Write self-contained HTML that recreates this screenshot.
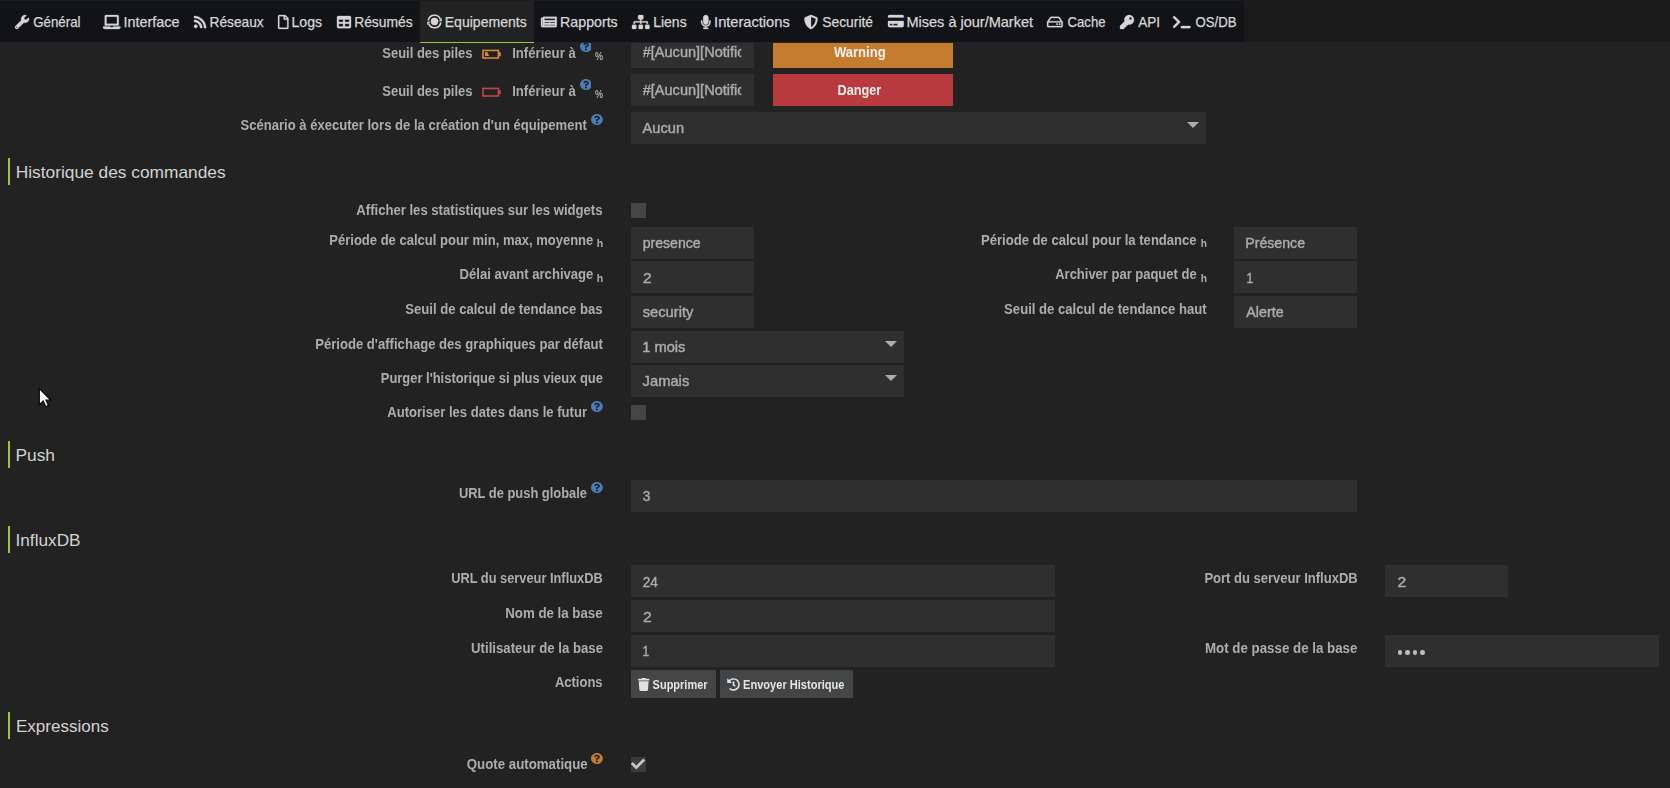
<!DOCTYPE html>
<html lang="fr"><head><meta charset="utf-8"><title>Jeedom - Configuration</title><style>
html,body{margin:0;padding:0}
body{width:1670px;height:788px;overflow:hidden;background:#222222;font-family:"Liberation Sans", sans-serif;position:relative}
#page,#page *{box-sizing:border-box}
.t{position:absolute;white-space:nowrap;transform-origin:0 0;margin:0;padding:0;border:0;text-decoration:none;display:block;font-weight:400}
sub.t{vertical-align:baseline}
#gl{position:absolute;left:0;top:0;width:1670px;height:788px;will-change:transform}
.nav{-webkit-text-stroke:0.25px currentColor}
.val{-webkit-text-stroke:0.4px currentColor}
.b,.ico{position:absolute;display:block}
.inp{background:#2f2f2f}
.cb{background:#444547}
.btn{background:#444547}
.bar{background:#94ca3c}
.arrow{position:absolute;right:7px;top:10px;width:0;height:0;border-left:6px solid transparent;border-right:6px solid transparent;border-top:6.4px solid #adadad}
.dot{position:absolute;width:4.4px;height:4.4px;border-radius:50%;background:#bcbcbc;top:15.2px}
#nav{position:absolute;left:0;top:0;width:1670px;height:43px;background:#222222;z-index:5}
#navr{position:absolute;left:0;top:0;width:1670px;height:42px;background:#1b1b1b}
#navin{position:absolute;left:0;top:1px;width:1244px;height:41px;background:#121316}
#navtop{position:absolute;left:0;top:0;width:1670px;height:1px;background:#1b1b1b}
#act{position:absolute;left:420px;top:1px;width:114px;height:42px;background:#222222;border-bottom:1px solid #94ca3c}
</style></head>
<body><div id="page">
<div class="b inp" style="left:631px;top:36px;width:123px;height:32px;"></div>
<div class="b inp" style="left:631px;top:74px;width:123px;height:32px;"></div>
<div class="b inp sel" style="left:631px;top:112px;width:575px;height:32px;"><i class="arrow"></i></div>
<div class="b btn" style="left:773px;top:36px;width:180px;height:32px;background:#c47d2f"></div>
<div class="b btn" style="left:773px;top:74px;width:180px;height:32px;background:#b93a3e"></div>
<div class="b inp" style="left:631px;top:227px;width:123px;height:32px;"></div>
<div class="b inp" style="left:1234px;top:227px;width:123px;height:32px;"></div>
<div class="b inp" style="left:631px;top:261px;width:123px;height:32px;"></div>
<div class="b inp" style="left:1234px;top:261px;width:123px;height:32px;"></div>
<div class="b inp" style="left:631px;top:296px;width:123px;height:32px;"></div>
<div class="b inp" style="left:1234px;top:296px;width:123px;height:32px;"></div>
<div class="b inp sel" style="left:631px;top:331px;width:273px;height:32px;"><i class="arrow"></i></div>
<div class="b inp sel" style="left:631px;top:365px;width:273px;height:32px;"><i class="arrow"></i></div>
<div class="b inp" style="left:631px;top:480px;width:726px;height:32px;"></div>
<div class="b inp" style="left:631px;top:565px;width:424px;height:32px;"></div>
<div class="b inp" style="left:631px;top:600px;width:424px;height:32px;"></div>
<div class="b inp" style="left:631px;top:635px;width:424px;height:32px;"></div>
<div class="b inp" style="left:1385px;top:565px;width:123px;height:32px;"></div>
<div class="b inp" style="left:1385px;top:635px;width:274px;height:32px;"><i class="dot" style="left:12.85px"></i><i class="dot" style="left:20.35px"></i><i class="dot" style="left:27.90px"></i><i class="dot" style="left:35.45px"></i></div>
<div class="b btn" style="left:631px;top:670px;width:85px;height:28px;"></div>
<div class="b btn" style="left:720px;top:670px;width:133px;height:28px;"></div>
<div class="b cb" style="left:631px;top:203px;width:15px;height:15px;"></div>
<div class="b cb" style="left:631px;top:405px;width:15px;height:15px;"></div>
<div class="b cb" style="left:631px;top:757px;width:15px;height:15px;background:#3b3b3b"></div>
<div class="b bar" style="left:8px;top:158px;width:2px;height:27px;"></div>
<div class="b bar" style="left:8px;top:441px;width:2px;height:27px;"></div>
<div class="b bar" style="left:8px;top:526px;width:2px;height:27px;"></div>
<div class="b bar" style="left:8px;top:712px;width:2px;height:27px;"></div>
<svg class="ico" style="left:638.40px;top:678.00px;overflow:visible" width="11.375" height="13" viewBox="0 0 448 512"><path fill="#e0e0e0" d="M432 32H312l-9.4-18.7A24 24 0 0 0 281.1 0H166.8a23.72 23.72 0 0 0-21.4 13.3L136 32H16A16 16 0 0 0 0 48v32a16 16 0 0 0 16 16h416a16 16 0 0 0 16-16V48a16 16 0 0 0-16-16zM53.2 467a48 48 0 0 0 47.9 45h245.800a48 48 0 0 0 47.9-45L416 128H32z"/></svg>
<svg class="ico" style="left:726.85px;top:678.00px;overflow:visible" width="13.000" height="13" viewBox="0 0 512 512"><path fill="#e0e0e0" d="M504 255.531c.253 136.64-111.18 248.372-247.82 248.468-59.015.042-113.223-20.53-155.822-54.911-11.077-8.94-11.905-25.541-1.839-35.607l11.267-11.267c8.609-8.609 22.353-9.551 31.891-1.984C173.062 425.135 212.781 440 256 440c101.705 0 184-82.311 184-184 0-101.705-82.311-184-184-184-48.814 0-93.149 18.969-126.068 49.932l50.754 50.754c10.08 10.08 2.941 27.314-11.313 27.314H24c-8.837 0-16-7.163-16-16V38.627c0-14.254 17.234-21.393 27.314-11.314l49.372 49.372C129.209 34.136 189.552 8 256 8c136.81 0 247.747 110.78 248 247.531zm-180.912 78.784l9.823-12.63c8.138-10.463 6.253-25.542-4.21-33.679L288 256.349V152c0-13.255-10.745-24-24-24h-16c-13.255 0-24 10.745-24 24v135.651l65.409 50.874c10.463 8.137 25.541 6.253 33.679-4.21z"/></svg>
<svg class="ico" style="left:630.60px;top:757.00px;overflow:visible" width="14.000" height="14" viewBox="0 0 512 512"><path fill="#c4c4c4" d="M173.898 439.404l-166.4-166.4c-9.997-9.997-9.997-26.206 0-36.204l36.203-36.204c9.997-9.998 26.207-9.998 36.204 0L192 312.69 432.095 72.596c9.997-9.997 26.207-9.997 36.204 0l36.203 36.204c9.997 9.997 9.997 26.206 0 36.204l-294.4 294.401c-9.998 9.997-26.207 9.997-36.204-.001z"/></svg>
<svg class="ico" style="left:579.55px;top:40.95px" width="11.9" height="11.1" viewBox="8 8 496 496" preserveAspectRatio="none"><path fill="#4a7eb7" d="M504 256c0 136.997-111.043 248-248 248S8 392.997 8 256C8 119.083 119.043 8 256 8s248 111.083 248 248zM262.655 90c-54.497 0-89.255 22.957-116.549 63.758-3.536 5.286-2.353 12.415 2.715 16.258l34.699 26.31c5.205 3.947 12.621 3.008 16.665-2.122 17.864-22.658 30.113-35.797 57.303-35.797 20.429 0 45.698 13.148 45.698 32.958 0 14.976-12.363 22.667-32.534 33.976C247.128 238.528 216 254.941 216 296v4c0 6.627 5.373 12 12 12h56c6.627 0 12-5.373 12-12v-1.333c0-28.462 83.186-29.647 83.186-106.667 0-58.002-60.165-102-116.531-102zM256 338c-25.365 0-46 20.635-46 46 0 25.364 20.635 46 46 46s46-20.636 46-46c0-25.365-20.635-46-46-46z"/></svg>
<svg class="ico" style="left:579.55px;top:78.95px" width="11.9" height="11.1" viewBox="8 8 496 496" preserveAspectRatio="none"><path fill="#4a7eb7" d="M504 256c0 136.997-111.043 248-248 248S8 392.997 8 256C8 119.083 119.043 8 256 8s248 111.083 248 248zM262.655 90c-54.497 0-89.255 22.957-116.549 63.758-3.536 5.286-2.353 12.415 2.715 16.258l34.699 26.31c5.205 3.947 12.621 3.008 16.665-2.122 17.864-22.658 30.113-35.797 57.303-35.797 20.429 0 45.698 13.148 45.698 32.958 0 14.976-12.363 22.667-32.534 33.976C247.128 238.528 216 254.941 216 296v4c0 6.627 5.373 12 12 12h56c6.627 0 12-5.373 12-12v-1.333c0-28.462 83.186-29.647 83.186-106.667 0-58.002-60.165-102-116.531-102zM256 338c-25.365 0-46 20.635-46 46 0 25.364 20.635 46 46 46s46-20.636 46-46c0-25.365-20.635-46-46-46z"/></svg>
<svg class="ico" style="left:591.05px;top:113.85px" width="11.9" height="11.1" viewBox="8 8 496 496" preserveAspectRatio="none"><path fill="#4a7eb7" d="M504 256c0 136.997-111.043 248-248 248S8 392.997 8 256C8 119.083 119.043 8 256 8s248 111.083 248 248zM262.655 90c-54.497 0-89.255 22.957-116.549 63.758-3.536 5.286-2.353 12.415 2.715 16.258l34.699 26.31c5.205 3.947 12.621 3.008 16.665-2.122 17.864-22.658 30.113-35.797 57.303-35.797 20.429 0 45.698 13.148 45.698 32.958 0 14.976-12.363 22.667-32.534 33.976C247.128 238.528 216 254.941 216 296v4c0 6.627 5.373 12 12 12h56c6.627 0 12-5.373 12-12v-1.333c0-28.462 83.186-29.647 83.186-106.667 0-58.002-60.165-102-116.531-102zM256 338c-25.365 0-46 20.635-46 46 0 25.364 20.635 46 46 46s46-20.636 46-46c0-25.365-20.635-46-46-46z"/></svg>
<svg class="ico" style="left:590.90px;top:400.90px" width="11.9" height="11.1" viewBox="8 8 496 496" preserveAspectRatio="none"><path fill="#4a7eb7" d="M504 256c0 136.997-111.043 248-248 248S8 392.997 8 256C8 119.083 119.043 8 256 8s248 111.083 248 248zM262.655 90c-54.497 0-89.255 22.957-116.549 63.758-3.536 5.286-2.353 12.415 2.715 16.258l34.699 26.31c5.205 3.947 12.621 3.008 16.665-2.122 17.864-22.658 30.113-35.797 57.303-35.797 20.429 0 45.698 13.148 45.698 32.958 0 14.976-12.363 22.667-32.534 33.976C247.128 238.528 216 254.941 216 296v4c0 6.627 5.373 12 12 12h56c6.627 0 12-5.373 12-12v-1.333c0-28.462 83.186-29.647 83.186-106.667 0-58.002-60.165-102-116.531-102zM256 338c-25.365 0-46 20.635-46 46 0 25.364 20.635 46 46 46s46-20.636 46-46c0-25.365-20.635-46-46-46z"/></svg>
<svg class="ico" style="left:591.05px;top:482.15px" width="11.9" height="11.1" viewBox="8 8 496 496" preserveAspectRatio="none"><path fill="#4a7eb7" d="M504 256c0 136.997-111.043 248-248 248S8 392.997 8 256C8 119.083 119.043 8 256 8s248 111.083 248 248zM262.655 90c-54.497 0-89.255 22.957-116.549 63.758-3.536 5.286-2.353 12.415 2.715 16.258l34.699 26.31c5.205 3.947 12.621 3.008 16.665-2.122 17.864-22.658 30.113-35.797 57.303-35.797 20.429 0 45.698 13.148 45.698 32.958 0 14.976-12.363 22.667-32.534 33.976C247.128 238.528 216 254.941 216 296v4c0 6.627 5.373 12 12 12h56c6.627 0 12-5.373 12-12v-1.333c0-28.462 83.186-29.647 83.186-106.667 0-58.002-60.165-102-116.531-102zM256 338c-25.365 0-46 20.635-46 46 0 25.364 20.635 46 46 46s46-20.636 46-46c0-25.365-20.635-46-46-46z"/></svg>
<svg class="ico" style="left:591.05px;top:752.85px" width="11.9" height="11.1" viewBox="8 8 496 496" preserveAspectRatio="none"><path fill="#c47d2f" d="M504 256c0 136.997-111.043 248-248 248S8 392.997 8 256C8 119.083 119.043 8 256 8s248 111.083 248 248zM262.655 90c-54.497 0-89.255 22.957-116.549 63.758-3.536 5.286-2.353 12.415 2.715 16.258l34.699 26.31c5.205 3.947 12.621 3.008 16.665-2.122 17.864-22.658 30.113-35.797 57.303-35.797 20.429 0 45.698 13.148 45.698 32.958 0 14.976-12.363 22.667-32.534 33.976C247.128 238.528 216 254.941 216 296v4c0 6.627 5.373 12 12 12h56c6.627 0 12-5.373 12-12v-1.333c0-28.462 83.186-29.647 83.186-106.667 0-58.002-60.165-102-116.531-102zM256 338c-25.365 0-46 20.635-46 46 0 25.364 20.635 46 46 46s46-20.636 46-46c0-25.365-20.635-46-46-46z"/></svg>
<svg class="ico" style="left:481.8px;top:49.4px" width="20" height="10" viewBox="0 0 20 10"><rect x="1" y="1.45" width="15.4" height="7.55" fill="none" stroke="#d68b34" stroke-width="1.6"/><rect x="17" y="3.2" width="1.8" height="4" fill="#d68b34"/><path d="M3.05 2.9h2.25l1.9 4h-4.15z" fill="#d68b34"/></svg>
<svg class="ico" style="left:481.8px;top:87.4px" width="20" height="10" viewBox="0 0 20 10"><rect x="1" y="1.45" width="15.4" height="7.55" fill="none" stroke="#c9414a" stroke-width="1.6"/><rect x="17" y="3.2" width="1.8" height="4" fill="#c9414a"/></svg>
<svg class="ico" style="left:38px;top:387px;z-index:9" width="14" height="21" viewBox="0 0 14 21"><path d="M1.3 1.6V17.6L5.2 14L7.7 19.6L10.4 18.5L8 13.2H13Z" fill="#fff" stroke="#05050c" stroke-width="1.2" stroke-linejoin="miter"/></svg>
<legend class="t leg" style="left:15px;top:160.50px;font-size:17px;line-height:24px;transform:translateX(0.68px) scaleX(1.0192);color:#d2d2d2;">Historique des commandes</legend>
<legend class="t leg" style="left:15px;top:443.50px;font-size:17px;line-height:24px;transform:translateX(0.48px) scaleX(1.0189);color:#d2d2d2;">Push</legend>
<legend class="t leg" style="left:15px;top:528.50px;font-size:17px;line-height:24px;transform:translateX(0.49px) scaleX(1.0126);color:#d2d2d2;">InfluxDB</legend>
<legend class="t leg" style="left:15px;top:714.50px;font-size:17px;line-height:24px;transform:translateX(0.90px) scaleX(1.0033);color:#d2d2d2;">Expressions</legend>
<div id="gl"><label class="t lbl" style="left:382px;top:43.00px;font-size:14px;line-height:20px;transform:translateX(0.30px) scaleX(0.9274);color:#adadad;font-weight:700;">Seuil des piles</label>
<label class="t lbl" style="left:512px;top:43.00px;font-size:14px;line-height:20px;transform:translateX(0.20px) scaleX(0.9381);color:#adadad;font-weight:700;">Inférieur à</label>
<label class="t lbl" style="left:382px;top:81.00px;font-size:14px;line-height:20px;transform:translateX(0.30px) scaleX(0.9274);color:#adadad;font-weight:700;">Seuil des piles</label>
<label class="t lbl" style="left:512px;top:81.00px;font-size:14px;line-height:20px;transform:translateX(0.20px) scaleX(0.9381);color:#adadad;font-weight:700;">Inférieur à</label>
<label class="t lbl" style="left:240px;top:115.00px;font-size:14px;line-height:20px;transform:translateX(0.50px) scaleX(0.9325);color:#adadad;font-weight:700;">Scénario à éxecuter lors de la création d'un équipement</label>
<label class="t lbl" style="left:356px;top:200.00px;font-size:14px;line-height:20px;transform:translateX(0.30px) scaleX(0.9362);color:#adadad;font-weight:700;">Afficher les statistiques sur les widgets</label>
<label class="t lbl" style="left:329px;top:230.00px;font-size:14px;line-height:20px;transform:translateX(0.30px) scaleX(0.9297);color:#adadad;font-weight:700;">Période de calcul pour min, max, moyenne</label>
<label class="t lbl" style="left:459px;top:264.00px;font-size:14px;line-height:20px;transform:translateX(0.60px) scaleX(0.9338);color:#adadad;font-weight:700;">Délai avant archivage</label>
<label class="t lbl" style="left:405px;top:299.00px;font-size:14px;line-height:20px;transform:translateX(0.30px) scaleX(0.9352);color:#adadad;font-weight:700;">Seuil de calcul de tendance bas</label>
<label class="t lbl" style="left:315px;top:334.00px;font-size:14px;line-height:20px;transform:translateX(0.20px) scaleX(0.9352);color:#adadad;font-weight:700;">Période d'affichage des graphiques par défaut</label>
<label class="t lbl" style="left:380px;top:368.00px;font-size:14px;line-height:20px;transform:translateX(0.80px) scaleX(0.9231);color:#adadad;font-weight:700;">Purger l'historique si plus vieux que</label>
<label class="t lbl" style="left:387px;top:402.00px;font-size:14px;line-height:20px;transform:translateX(0.20px) scaleX(0.9338);color:#adadad;font-weight:700;">Autoriser les dates dans le futur</label>
<label class="t lbl" style="left:981px;top:230.00px;font-size:14px;line-height:20px;transform:translateX(0.00px) scaleX(0.9331);color:#adadad;font-weight:700;">Période de calcul pour la tendance</label>
<label class="t lbl" style="left:1055px;top:264.00px;font-size:14px;line-height:20px;transform:translateX(0.20px) scaleX(0.9273);color:#adadad;font-weight:700;">Archiver par paquet de</label>
<label class="t lbl" style="left:1004px;top:299.00px;font-size:14px;line-height:20px;transform:translateX(0.10px) scaleX(0.9362);color:#adadad;font-weight:700;">Seuil de calcul de tendance haut</label>
<label class="t lbl" style="left:459px;top:483.00px;font-size:14px;line-height:20px;transform:translateX(0.00px) scaleX(0.9208);color:#adadad;font-weight:700;">URL de push globale</label>
<label class="t lbl" style="left:451px;top:568.00px;font-size:14px;line-height:20px;transform:translateX(0.20px) scaleX(0.9156);color:#adadad;font-weight:700;">URL du serveur InfluxDB</label>
<label class="t lbl" style="left:505px;top:603.00px;font-size:14px;line-height:20px;transform:translateX(0.20px) scaleX(0.9483);color:#adadad;font-weight:700;">Nom de la base</label>
<label class="t lbl" style="left:471px;top:637.50px;font-size:14px;line-height:20px;transform:translateX(0.10px) scaleX(0.9418);color:#adadad;font-weight:700;">Utilisateur de la base</label>
<label class="t lbl" style="left:554px;top:672.00px;font-size:14px;line-height:20px;transform:translateX(0.90px) scaleX(0.9292);color:#adadad;font-weight:700;">Actions</label>
<label class="t lbl" style="left:1204px;top:568.00px;font-size:14px;line-height:20px;transform:translateX(0.40px) scaleX(0.9296);color:#adadad;font-weight:700;">Port du serveur InfluxDB</label>
<label class="t lbl" style="left:1205px;top:638.00px;font-size:14px;line-height:20px;transform:translateX(0.00px) scaleX(0.9508);color:#adadad;font-weight:700;">Mot de passe de la base</label>
<label class="t lbl" style="left:466px;top:754.00px;font-size:14px;line-height:20px;transform:translateX(0.70px) scaleX(0.9486);color:#adadad;font-weight:700;">Quote automatique</label>
<sub class="t sub" style="left:595px;top:49.50px;font-size:10px;line-height:14px;transform:translateX(0.00px) scaleX(0.9111);color:#adadad;font-weight:700;">%</sub>
<sub class="t sub" style="left:595px;top:87.50px;font-size:10px;line-height:14px;transform:translateX(0.00px) scaleX(0.9111);color:#adadad;font-weight:700;">%</sub>
<sub class="t sub" style="left:596px;top:236.00px;font-size:10.5px;line-height:14px;transform:translateX(0.70px) scaleX(1.0000);color:#adadad;font-weight:700;">h</sub>
<sub class="t sub" style="left:596px;top:271.00px;font-size:10.5px;line-height:14px;transform:translateX(0.70px) scaleX(1.0000);color:#adadad;font-weight:700;">h</sub>
<sub class="t sub" style="left:1200px;top:236.00px;font-size:10.5px;line-height:14px;transform:translateX(0.70px) scaleX(0.9667);color:#adadad;font-weight:700;">h</sub>
<sub class="t sub" style="left:1200px;top:271.00px;font-size:10.5px;line-height:14px;transform:translateX(0.70px) scaleX(0.9667);color:#adadad;font-weight:700;">h</sub>
<span class="t val" style="left:642px;top:118.50px;font-size:13.72px;line-height:20px;transform:translateX(0.60px) scaleX(1.0661);color:#acacac;">Aucun</span>
<span class="t val" style="left:642px;top:233.50px;font-size:13.72px;line-height:20px;transform:translateX(0.70px) scaleX(1.0263);color:#acacac;">presence</span>
<span class="t val" style="left:643px;top:268.50px;font-size:13.72px;line-height:20px;transform:translateX(0.00px) scaleX(1.1286);color:#acacac;">2</span>
<span class="t val" style="left:642px;top:302.50px;font-size:13.72px;line-height:20px;transform:translateX(0.70px) scaleX(1.0737);color:#acacac;">security</span>
<span class="t val" style="left:642px;top:337.50px;font-size:13.72px;line-height:20px;transform:translateX(0.23px) scaleX(1.0696);color:#acacac;">1 mois</span>
<span class="t val" style="left:642px;top:371.50px;font-size:13.72px;line-height:20px;transform:translateX(0.60px) scaleX(1.0735);color:#acacac;">Jamais</span>
<span class="t val" style="left:1245px;top:233.50px;font-size:13.72px;line-height:20px;transform:translateX(0.27px) scaleX(1.0309);color:#acacac;">Présence</span>
<span class="t val" style="left:1246px;top:268.50px;font-size:13.72px;line-height:20px;transform:translateX(0.52px) scaleX(0.8833);color:#acacac;">1</span>
<span class="t val" style="left:1246px;top:302.50px;font-size:13.72px;line-height:20px;transform:translateX(0.30px) scaleX(1.0412);color:#acacac;">Alerte</span>
<span class="t val" style="left:642px;top:486.50px;font-size:13.72px;line-height:20px;transform:translateX(0.80px) scaleX(0.9875);color:#acacac;">3</span>
<span class="t val" style="left:642px;top:572.50px;font-size:13.72px;line-height:20px;transform:translateX(0.80px) scaleX(0.9917);color:#acacac;">24</span>
<span class="t val" style="left:642px;top:607.50px;font-size:13.72px;line-height:20px;transform:translateX(0.90px) scaleX(1.1429);color:#acacac;">2</span>
<span class="t val" style="left:642px;top:641.50px;font-size:13.72px;line-height:20px;transform:translateX(0.52px) scaleX(0.8833);color:#acacac;">1</span>
<span class="t val" style="left:1397px;top:572.50px;font-size:13.72px;line-height:20px;transform:translateX(0.40px) scaleX(1.1429);color:#acacac;">2</span>
<span class="t val" style="left:642px;top:42.50px;font-size:13.72px;line-height:20px;transform:translateX(0.70px) scaleX(1.0601);color:#acacac;width:93.20px;overflow:hidden;">#[Aucun][Notification]#</span>
<span class="t val" style="left:642px;top:80.50px;font-size:13.72px;line-height:20px;transform:translateX(0.70px) scaleX(1.0601);color:#acacac;width:93.20px;overflow:hidden;">#[Aucun][Notification]#</span>
<span class="t btxt" style="left:834px;top:42.00px;font-size:14px;line-height:20px;transform:translateX(0.00px) scaleX(0.9304);color:#f2f2f2;font-weight:700;">Warning</span>
<span class="t btxt" style="left:837px;top:80.00px;font-size:14px;line-height:20px;transform:translateX(0.60px) scaleX(0.9039);color:#f2f2f2;font-weight:700;">Danger</span>
<span class="t btxt" style="left:652px;top:676.70px;font-size:12px;line-height:17px;transform:translateX(0.60px) scaleX(0.9164);color:#e4e4e4;font-weight:700;">Supprimer</span>
<span class="t btxt" style="left:743px;top:676.70px;font-size:12px;line-height:17px;transform:translateX(0.10px) scaleX(0.9207);color:#e4e4e4;font-weight:700;">Envoyer Historique</span></div>
<div id="nav"><div id="navr"></div><div id="navin"></div><div id="navtop"></div><div id="act"></div>
<svg class="ico" style="left:15.20px;top:15.00px;overflow:visible" width="14.000" height="14" viewBox="0 0 512 512"><path fill="#d6d6d6" stroke="#d6d6d6" stroke-width="10" d="M507.73 109.1c-2.24-9.03-13.54-12.09-20.12-5.51l-74.36 74.36-67.88-11.31-11.31-67.88 74.36-74.36c6.62-6.62 3.43-17.9-5.66-20.16-47.38-11.74-99.55.91-136.58 37.93-39.64 39.64-50.55 97.1-34.05 147.2L18.74 402.76c-24.99 24.99-24.99 65.51 0 90.5 24.99 24.99 65.51 24.99 90.5 0l213.21-213.21c50.12 16.71 107.47 5.68 147.37-34.22 37.07-37.07 49.7-89.32 37.91-136.73zM64 472c-13.25 0-24-10.75-24-24 0-13.26 10.75-24 24-24s24 10.74 24 24c0 13.25-10.75 24-24 24z"/></svg>
<svg class="ico" style="left:102.85px;top:15.00px;overflow:visible" width="17.500" height="14" viewBox="0 0 640 512"><path fill="#d6d6d6" stroke="#d6d6d6" stroke-width="10" d="M624 416H381.54c-.74 19.81-14.71 32-32.74 32H288c-18.69 0-33.02-17.47-32.77-32H16c-8.8 0-16 7.2-16 16v16c0 35.2 28.8 64 64 64h512c35.2 0 64-28.8 64-64v-16c0-8.8-7.2-16-16-16zM576 48c0-26.4-21.6-48-48-48H112C85.6 0 64 21.6 64 48v336h512V48zm-64 272H128V64h384v256z"/></svg>
<svg class="ico" style="left:194.20px;top:15.00px;overflow:visible" width="12.250" height="14" viewBox="0 0 448 512"><path fill="#d6d6d6" stroke="#d6d6d6" stroke-width="10" d="M128.081 415.959c0 35.369-28.672 64.041-64.041 64.041S0 451.328 0 415.959s28.672-64.041 64.041-64.041 64.04 28.673 64.04 64.041zm175.66 47.25c-8.354-154.6-132.185-278.587-286.95-286.95C7.656 175.765 0 183.105 0 192.253v48.069c0 8.415 6.49 15.472 14.887 16.018 111.832 7.284 201.473 96.702 208.772 208.772.547 8.397 7.604 14.887 16.018 14.887h48.069c9.149.001 16.489-7.655 15.995-16.79zm144.249.288C439.596 229.677 251.465 40.445 16.503 32.01 7.473 31.686 0 38.981 0 48.016v48.068c0 8.625 6.835 15.645 15.453 15.999 191.179 7.839 344.627 161.316 352.465 352.465.353 8.618 7.373 15.453 15.999 15.453h48.068c9.034-.001 16.329-7.474 16.005-16.504z"/></svg>
<svg class="ico" style="left:277.85px;top:15.00px;overflow:visible" width="10.500" height="14" viewBox="0 0 384 512"><path fill="#d6d6d6" stroke="#d6d6d6" stroke-width="10" d="M369.9 97.9L286 14C277 5 264.8-.1 252.1-.1H48C21.5 0 0 21.5 0 48v416c0 26.5 21.5 48 48 48h288c26.5 0 48-21.5 48-48V131.9c0-12.7-5.1-25-14.1-34zM332.1 128H256V51.9l76.1 76.1zM48 464V48h160v104c0 13.3 10.7 24 24 24h104v288H48z"/></svg>
<svg class="ico" style="left:336.70px;top:15.00px;overflow:visible" width="14.000" height="14" viewBox="0 0 512 512"><path fill="#d6d6d6" stroke="#d6d6d6" stroke-width="10" d="M464 32H48C21.49 32 0 53.49 0 80v352c0 26.51 21.49 48 48 48h416c26.51 0 48-21.49 48-48V80c0-26.51-21.49-48-48-48zM224 416H64v-96h160v96zm0-160H64v-96h160v96zm224 160H288v-96h160v96zm0-160H288v-96h160v96z"/></svg>
<svg class="ico" style="left:541.30px;top:15.00px;overflow:visible" width="15.750" height="14" viewBox="0 0 576 512"><path fill="#d6d6d6" stroke="#d6d6d6" stroke-width="10" d="M552 64H88c-13.255 0-24 10.745-24 24v8H24c-13.255 0-24 10.745-24 24v272c0 30.928 25.072 56 56 56h472c26.51 0 48-21.49 48-48V88c0-13.255-10.745-24-24-24zM56 400a8 8 0 0 1-8-8V144h16v248a8 8 0 0 1-8 8zm236-16H140c-6.627 0-12-5.373-12-12v-8c0-6.627 5.373-12 12-12h152c6.627 0 12 5.373 12 12v8c0 6.627-5.373 12-12 12zm208 0H348c-6.627 0-12-5.373-12-12v-8c0-6.627 5.373-12 12-12h152c6.627 0 12 5.373 12 12v8c0 6.627-5.373 12-12 12zm-208-96H140c-6.627 0-12-5.373-12-12v-8c0-6.627 5.373-12 12-12h152c6.627 0 12 5.373 12 12v8c0 6.627-5.373 12-12 12zm208 0H348c-6.627 0-12-5.373-12-12v-8c0-6.627 5.373-12 12-12h152c6.627 0 12 5.373 12 12v8c0 6.627-5.373 12-12 12zm0-96H140c-6.627 0-12-5.373-12-12v-40c0-6.627 5.373-12 12-12h360c6.627 0 12 5.373 12 12v40c0 6.627-5.373 12-12 12z"/></svg>
<svg class="ico" style="left:632.45px;top:15.00px;overflow:visible" width="17.500" height="14" viewBox="0 0 640 512"><path fill="#d6d6d6" stroke="#d6d6d6" stroke-width="10" d="M128 352H32c-17.67 0-32 14.33-32 32v96c0 17.67 14.33 32 32 32h96c17.67 0 32-14.33 32-32v-96c0-17.67-14.33-32-32-32zm-24-80h192v48h48v-48h192v48h48v-57.59c0-21.17-17.23-38.41-38.41-38.41H344v-64h40c17.67 0 32-14.33 32-32V32c0-17.67-14.33-32-32-32H256c-17.67 0-32 14.33-32 32v96c0 17.67 14.33 32 32 32h40v64H94.41C73.23 224 56 241.23 56 262.41V320h48v-48zm264 80h-96c-17.67 0-32 14.33-32 32v96c0 17.67 14.33 32 32 32h96c17.67 0 32-14.33 32-32v-96c0-17.67-14.33-32-32-32zm240 0h-96c-17.67 0-32 14.33-32 32v96c0 17.67 14.33 32 32 32h96c17.67 0 32-14.33 32-32v-96c0-17.67-14.33-32-32-32z"/></svg>
<svg class="ico" style="left:701.20px;top:15.00px;overflow:visible" width="9.625" height="14" viewBox="0 0 352 512"><path fill="#d6d6d6" stroke="#d6d6d6" stroke-width="10" d="M176 352c53.02 0 96-42.98 96-96V96c0-53.02-42.98-96-96-96S80 42.98 80 96v160c0 53.02 42.98 96 96 96zm160-160h-16c-8.84 0-16 7.16-16 16v48c0 74.8-64.49 134.82-140.79 127.38C96.71 376.89 48 317.11 48 250.3V208c0-8.84-7.16-16-16-16H16c-8.84 0-16 7.16-16 16v40.16c0 89.64 63.97 169.55 152 181.69V464H96c-8.84 0-16 7.16-16 16v16c0 8.84 7.16 16 16 16h160c8.84 0 16-7.16 16-16v-16c0-8.84-7.16-16-16-16h-56v-33.77C285.71 418.47 352 344.9 352 256v-48c0-8.84-7.16-16-16-16z"/></svg>
<svg class="ico" style="left:804.00px;top:15.00px;overflow:visible" width="14.000" height="14" viewBox="0 0 512 512"><path fill="#d6d6d6" stroke="#d6d6d6" stroke-width="10" d="M466.5 83.7l-192-80a48.15 48.15 0 0 0-36.9 0l-192 80C27.7 91.1 16 108.6 16 128c0 198.5 114.5 335.700 221.5 380.3 11.8 4.9 25.1 4.9 36.9 0C360.1 472.6 496 349.3 496 128c0-19.4-11.7-36.9-29.5-44.3zM256.1 446.3l-.1-381 175.9 73.3c-3.3 151.4-82.1 261.1-175.8 307.7z"/></svg>
<svg class="ico" style="left:887.60px;top:14.40px;overflow:visible" width="15.750" height="14" viewBox="0 0 576 512"><path fill="#d6d6d6" stroke="#d6d6d6" stroke-width="10" d="M0 432c0 26.5 21.5 48 48 48h480c26.5 0 48-21.5 48-48V256H0v176zm192-68c0-6.600 5.4-12 12-12h136c6.6 0 12 5.4 12 12v40c0 6.600-5.4 12-12 12H204c-6.6 0-12-5.4-12-12v-40zm-128 0c0-6.600 5.4-12 12-12h72c6.6 0 12 5.4 12 12v40c0 6.600-5.4 12-12 12H76c-6.6 0-12-5.4-12-12v-40zM576 80v48H0V80c0-26.5 21.5-48 48-48h480c26.5 0 48 21.5 48 48z"/></svg>
<svg class="ico" style="left:1047.40px;top:15.00px;overflow:visible" width="15.750" height="14" viewBox="0 0 576 512"><path fill="#d6d6d6" stroke="#d6d6d6" stroke-width="10" d="M567.403 235.642L462.323 84.589A48 48 0 0 0 422.919 64H153.081a48 48 0 0 0-39.404 20.589L8.597 235.642A48.001 48.001 0 0 0 0 263.054V400c0 26.51 21.49 48 48 48h480c26.51 0 48-21.49 48-48V263.054c0-9.801-3-19.366-8.597-27.412zM153.081 112h269.838l77.913 112H75.168l77.913-112zM528 400H48V272h480v128zm-32-64c0 17.673-14.327 32-32 32s-32-14.327-32-32 14.327-32 32-32 32 14.327 32 32zm-96 0c0 17.673-14.327 32-32 32s-32-14.327-32-32 14.327-32 32-32 32 14.327 32 32z"/></svg>
<svg class="ico" style="left:1120.20px;top:15.00px;overflow:visible" width="14.000" height="14" viewBox="0 0 512 512"><path fill="#d6d6d6" stroke="#d6d6d6" stroke-width="10" d="M512 176.001C512 273.203 433.202 352 336 352c-11.22 0-22.19-1.062-32.827-3.069l-24.012 27.014A23.999 23.999 0 0 1 261.223 384H224v40c0 13.255-10.745 24-24 24h-40v40c0 13.255-10.745 24-24 24H24c-13.255 0-24-10.745-24-24v-78.059c0-6.365 2.529-12.47 7.029-16.971l161.802-161.802C163.108 213.814 160 195.271 160 176 160 78.798 238.797.001 335.999 0 433.488-.001 512 78.511 512 176.001zM336 128c0 26.51 21.49 48 48 48s48-21.49 48-48-21.49-48-48-48-48 21.49-48 48z"/></svg>
<svg class="ico" style="left:1173.45px;top:15.00px;overflow:visible" width="17.500" height="14" viewBox="0 0 640 512"><path fill="#d6d6d6" stroke="#d6d6d6" stroke-width="10" d="M257.981 272.971L63.638 467.314c-9.373 9.373-24.569 9.373-33.941 0L7.029 444.647c-9.357-9.357-9.375-24.522-.04-33.901L161.011 256 6.99 101.255c-9.335-9.379-9.317-24.544.04-33.901l22.667-22.667c9.373-9.373 24.569-9.373 33.941 0L257.981 239.03c9.373 9.372 9.373 24.568 0 33.941zM640 456v-32c0-13.255-10.745-24-24-24H312c-13.255 0-24 10.745-24 24v32c0 13.255 10.745 24 24 24h304c13.255 0 24-10.745 24-24z"/></svg>
<svg class="ico" style="left:427px;top:13.7px" width="15" height="15" viewBox="0 0 15 15"><g fill="none" stroke="#d6d6d6" stroke-width="1.6"><path d="M1.31 6.62A6.3 6.3 0 0 1 13.4 5.2"/><path d="M13.79 8.38A6.3 6.3 0 0 1 1.7 9.8"/></g><path d="M14.9 3.9V7.2H11.6z" fill="#d6d6d6"/><path d="M0.2 11.1V7.8H3.5z" fill="#d6d6d6"/><circle cx="7.5" cy="7.5" r="3.7" fill="#d6d6d6"/></svg>
<a class="t nav" href="#" style="left:33px;top:12.50px;font-size:13.72px;line-height:20px;transform:translateX(0.15px) scaleX(0.9701);color:#d6d6d6;">Général</a>
<a class="t nav" href="#" style="left:123px;top:12.50px;font-size:13.72px;line-height:20px;transform:translateX(0.50px) scaleX(1.0483);color:#d6d6d6;">Interface</a>
<a class="t nav" href="#" style="left:209px;top:12.50px;font-size:13.72px;line-height:20px;transform:translateX(0.55px) scaleX(1.0003);color:#d6d6d6;">Réseaux</a>
<a class="t nav" href="#" style="left:291px;top:12.50px;font-size:13.72px;line-height:20px;transform:translateX(0.52px) scaleX(1.0281);color:#d6d6d6;">Logs</a>
<a class="t nav" href="#" style="left:354px;top:12.50px;font-size:13.72px;line-height:20px;transform:translateX(0.14px) scaleX(1.0108);color:#d6d6d6;">Résumés</a>
<a class="t nav" href="#" style="left:444px;top:12.50px;font-size:13.72px;line-height:20px;transform:translateX(0.73px) scaleX(1.0238);color:#d6d6d6;">Equipements</a>
<a class="t nav" href="#" style="left:560px;top:12.50px;font-size:13.72px;line-height:20px;transform:translateX(0.12px) scaleX(1.0346);color:#d6d6d6;">Rapports</a>
<a class="t nav" href="#" style="left:653px;top:12.50px;font-size:13.72px;line-height:20px;transform:translateX(0.13px) scaleX(1.0239);color:#d6d6d6;">Liens</a>
<a class="t nav" href="#" style="left:714px;top:12.50px;font-size:13.72px;line-height:20px;transform:translateX(0.08px) scaleX(1.0662);color:#d6d6d6;">Interactions</a>
<a class="t nav" href="#" style="left:822px;top:12.50px;font-size:13.72px;line-height:20px;transform:translateX(0.15px) scaleX(1.0119);color:#d6d6d6;">Securité</a>
<a class="t nav" href="#" style="left:906px;top:12.50px;font-size:13.72px;line-height:20px;transform:translateX(0.49px) scaleX(1.0574);color:#d6d6d6;">Mises à jour/Market</a>
<a class="t nav" href="#" style="left:1067px;top:12.50px;font-size:13.72px;line-height:20px;transform:translateX(0.55px) scaleX(0.9569);color:#d6d6d6;">Cache</a>
<a class="t nav" href="#" style="left:1138px;top:12.50px;font-size:13.72px;line-height:20px;transform:translateX(0.15px) scaleX(0.9906);color:#d6d6d6;">API</a>
<a class="t nav" href="#" style="left:1195px;top:12.50px;font-size:13.72px;line-height:20px;transform:translateX(0.55px) scaleX(0.9614);color:#d6d6d6;">OS/DB</a>
</div>
</div></body></html>
